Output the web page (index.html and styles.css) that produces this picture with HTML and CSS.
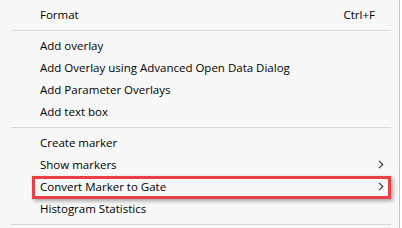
FILE: index.html
```html
<!DOCTYPE html>
<html>
<head>
<meta charset="utf-8">
<link rel="stylesheet" href="styles.css">
</head>
<body>
<div class="menu">
  <div class="item"><span>Format</span><span class="shortcut">Ctrl+F</span></div>
  <div class="sep"></div>
  <div class="item"><span>Add overlay</span></div>
  <div class="item"><span>Add Overlay using Advanced Open Data Dialog</span></div>
  <div class="item"><span>Add Parameter Overlays</span></div>
  <div class="item"><span>Add text box</span></div>
  <div class="sep"></div>
  <div class="item"><span>Create marker</span></div>
  <div class="item"><span>Show markers</span><svg class="chev" width="6" height="9" viewBox="0 0 6 9"><path d="M1 0.8 L4.8 4.5 L1 8.2" fill="none" stroke="#333" stroke-width="1.1"/></svg></div>
  <div class="item highlight"><span>Convert Marker to Gate</span><svg class="chev" width="6" height="9" viewBox="0 0 6 9"><path d="M1 0.8 L4.8 4.5 L1 8.2" fill="none" stroke="#333" stroke-width="1.1"/></svg></div>
  <div class="item"><span>Histogram Statistics</span></div>
  <div class="sep"></div>
</div>
</body>
</html>
```
FILE: styles.css
```css
html, body {
  margin: 0;
  padding: 0;
  background: #ffffff;
}
.menu {
  width: 400px;
  height: 228px;
  box-sizing: border-box;
  background: #f8f8f8;
  border-right: 1px solid #c4c4c4;
  padding-top: 4px;
  font-family: "Open Sans", "Noto Sans", sans-serif;
  font-size: 11.5px;
  color: #000;
  overflow: hidden;
}
.item {
  position: relative;
  height: 22px;
  box-sizing: border-box;
  display: flex;
  align-items: center;
  justify-content: space-between;
  padding: 0 15px 1px 40px;
}
.shortcut {
  margin-right: 9px;
}
.chev {
  display: block;
}
.sep {
  height: 1px;
  background: #d8d8d8;
  margin: 4px 8px 4px 11px;
}
.highlight::after {
  content: "";
  position: absolute;
  left: 32px;
  right: 8px;
  top: 0;
  bottom: -1px;
  border: 3px solid #ec3f45;
  box-shadow: 2px 2px 4px rgba(0, 0, 0, 0.35);
}
```
